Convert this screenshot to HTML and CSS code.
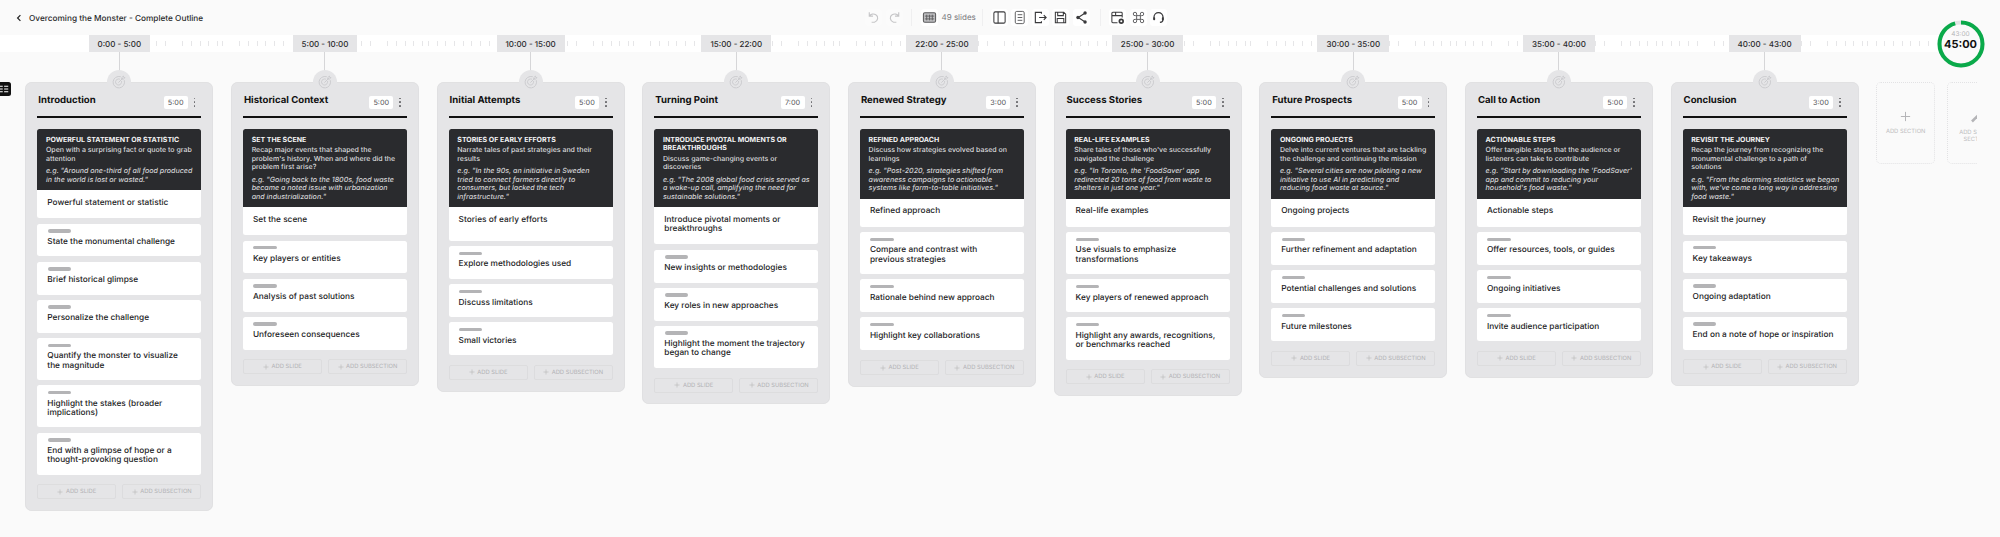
FILE: index.html
```html
<!DOCTYPE html>
<html lang="en">
<head>
<meta charset="utf-8">
<title>Overcoming the Monster - Complete Outline</title>
<link rel="stylesheet" href="styles.css">
</head>
<body>
<svg class="defs" width="0" height="0">
  <symbol id="target" viewBox="0 0 16 16"><g fill="none" stroke="currentColor" stroke-width="1.1" stroke-linecap="round"><path d="M14.200 6.400A6.600 6.600 0 1 1 9.600 1.800"/><path d="M11 7.400A3.500 3.500 0 1 1 8.600 4.600"/><path d="M7.600 8.400 12.400 3.600M11 3.200 13 1.200 13.400 2.600 14.800 3 12.800 5z"/></g></symbol>
  <symbol id="plus" viewBox="0 0 10 10"><path d="M5 .8v8.400M.8 5h8.400" fill="none" stroke="currentColor" stroke-width=".9"/></symbol>
</svg>

<header class="topbar">
  <div class="doc">
    <svg class="back" viewBox="0 0 8 8" width="8" height="8"><path d="M5.400 1.200 2.600 4l2.800 2.800" fill="none" stroke="#222" stroke-width="1.200"/></svg>
    <span class="doc-title">Overcoming the Monster - Complete Outline</span>
  </div>
  <div class="tools">
    <span class="tool ghost"><svg viewBox="0 0 16 16"><path d="M3.500 2.500v4h4M3.700 6.300C5 4.500 8 3.600 10.500 5c3 1.800 2.600 6.500-1.500 8H6" fill="none" stroke="currentColor" stroke-width="1.200"/></svg></span>
    <span class="tool ghost"><svg viewBox="0 0 16 16"><path d="M12.500 2.500v4h-4M12.300 6.300C11 4.500 8 3.600 5.500 5c-3 1.800-2.600 6.500 1.500 8h3" fill="none" stroke="currentColor" stroke-width="1.200"/></svg></span>
    <span class="sep sep-a"></span>
    <span class="tool tool-soft"><svg viewBox="0 0 16 16"><rect x="1.500" y="3" width="13" height="10" rx="1.500" fill="#bdbdbf" stroke="currentColor" stroke-width="1.100"/><path d="M3 6.500h10M3 9.500h10M5 5v6M8 5v6M11 5v6" stroke="currentColor" stroke-width=".9" fill="none"/></svg></span>
    <span class="slides-count">49 slides</span>
    <span class="sep sep-b"></span>
    <span class="tool"><svg viewBox="0 0 16 16"><rect x="2" y="2" width="12" height="12" rx="1.500" fill="none" stroke="currentColor" stroke-width="1.100"/><path d="M6.500 2v12" stroke="currentColor" stroke-width="1.100"/></svg></span>
    <span class="tool tool-soft"><svg viewBox="0 0 16 16"><path d="M3.500 3c0-1 .6-1.500 1.500-1.500h6.500c1 0 1.500.6 1.500 1.500v10c0 1-.6 1.500-1.500 1.500H5c-1 0-1.500-.6-1.500-1.500zM6 5h5M6 8h5M6 11h5" fill="none" stroke="currentColor" stroke-width="1"/></svg></span>
    <span class="tool"><svg viewBox="0 0 16 16"><path d="M9 4V2.500H2.500v11H9V12M6.500 8h7.500M11.500 5.500 14 8l-2.500 2.500" fill="none" stroke="currentColor" stroke-width="1.200"/></svg></span>
    <span class="tool"><svg viewBox="0 0 16 16"><path d="M2.500 2.500h9l2 2v9h-11zM5 2.500v3.500h6V2.500M4.500 13.500V9h7v4.500" fill="none" stroke="currentColor" stroke-width="1.100"/></svg></span>
    <span class="tool"><svg viewBox="0 0 16 16"><path d="M11.500 3.500 4.500 8l7 4.500" fill="none" stroke="currentColor" stroke-width="1.200"/><circle cx="4.200" cy="8" r="1.800" fill="currentColor"/><circle cx="11.800" cy="3.200" r="1.800" fill="currentColor"/><circle cx="11.800" cy="12.800" r="1.800" fill="currentColor"/></svg></span>
    <span class="sep sep-c"></span>
    <span class="tool"><svg viewBox="0 0 16 16"><path d="M8 13.500H3a1 1 0 0 1-1-1v-9a1 1 0 0 1 1-1h9a1 1 0 0 1 1 1V8M2 6h11M6 2.500V6" fill="none" stroke="currentColor" stroke-width="1.100"/><circle cx="12" cy="12" r="2" fill="none" stroke="currentColor" stroke-width="1.800"/></svg></span>
    <span class="tool tool-soft"><svg viewBox="0 0 16 16"><path d="M6 6h4v4H6zM6 6H4.500A1.800 1.800 0 1 1 6 4.500zM10 6V4.500A1.800 1.800 0 1 1 11.500 6zM10 10h1.500A1.800 1.800 0 1 1 10 11.500zM6 10v1.500A1.800 1.800 0 1 1 4.500 10z" fill="none" stroke="currentColor" stroke-width="1"/></svg></span>
    <span class="tool"><svg viewBox="0 0 16 16"><path d="M3.200 10V7.500a4.800 4.800 0 0 1 9.600 0V10M12.800 10c0 2-1.500 3-3.300 3.200" fill="none" stroke="currentColor" stroke-width="1.300"/><rect x="2.400" y="7.600" width="2" height="3.400" rx=".8" fill="currentColor"/><rect x="11.600" y="7.600" width="2" height="3.400" rx=".8" fill="currentColor"/></svg></span>
  </div>
</header>

<div class="timeline">
  <div class="slot slot-first"><span class="range">0:00 - 5:00</span></div>
  <div class="slot"><span class="range">5:00 - 10:00</span></div>
  <div class="slot"><span class="range">10:00 - 15:00</span></div>
  <div class="slot"><span class="range">15:00 - 22:00</span></div>
  <div class="slot"><span class="range">22:00 - 25:00</span></div>
  <div class="slot"><span class="range">25:00 - 30:00</span></div>
  <div class="slot"><span class="range">30:00 - 35:00</span></div>
  <div class="slot"><span class="range">35:00 - 40:00</span></div>
  <div class="slot"><span class="range">40:00 - 43:00</span></div>
  <div class="slot-tail"></div>
</div>

<div class="clock">
  <svg class="clock-ring" viewBox="0 0 48 48" width="48" height="48">
    <circle cx="24" cy="24" r="21.500" fill="#fafafa" stroke="#e3e3e5" stroke-width="4"/>
    <circle cx="24" cy="24" r="21.500" fill="none" stroke="#0aaa4a" stroke-width="4" pathLength="45" stroke-dasharray="43 45" transform="rotate(-90 24 24)"/>
  </svg>
  <span class="clock-used">43:00</span>
  <span class="clock-total">45:00</span>
</div>

<button class="side-tab" type="button" aria-label="Outline">
  <svg viewBox="0 0 12 14" width="11" height="14"><path d="M0 4h3M0 7h3M0 10h3M4.500 4H9M4.500 7H9M4.500 10H9" stroke="#fff" stroke-width="1.100" fill="none"/></svg>
</button>

<main class="board">

  <section class="col">
    <span class="connector"></span>
    <span class="notch"><svg width="14" height="14"><use href="#target"/></svg></span>
    <div class="col-head"><h2>Introduction</h2><span class="dur">5:00</span><span class="kebab"><i></i><i></i><i></i></span></div>
    <div class="rule"></div>
    <div class="cards">
      <div class="lead">
        <div class="brief">
          <h3>POWERFUL STATEMENT OR STATISTIC</h3>
          <p>Open with a surprising fact or quote to grab attention</p>
          <p class="eg">e.g. "Around one-third of all food produced in the world is lost or wasted."</p>
        </div>
        <div class="lead-text">Powerful statement or statistic</div>
      </div>
      <div class="item"><span class="bar"></span><div>State the monumental challenge</div></div>
      <div class="item"><span class="bar"></span><div>Brief historical glimpse</div></div>
      <div class="item"><span class="bar"></span><div>Personalize the challenge</div></div>
      <div class="item"><span class="bar"></span><div>Quantify the monster to visualize the magnitude</div></div>
      <div class="item"><span class="bar"></span><div>Highlight the stakes (broader implications)</div></div>
      <div class="item"><span class="bar"></span><div>End with a glimpse of hope or a thought-provoking question</div></div>
    </div>
    <div class="adds"><span class="add"><svg width="6" height="6"><use href="#plus"/></svg>ADD SLIDE</span><span class="add"><svg width="6" height="6"><use href="#plus"/></svg>ADD SUBSECTION</span></div>
  </section>

  <section class="col">
    <span class="connector"></span>
    <span class="notch"><svg width="14" height="14"><use href="#target"/></svg></span>
    <div class="col-head"><h2>Historical Context</h2><span class="dur">5:00</span><span class="kebab"><i></i><i></i><i></i></span></div>
    <div class="rule"></div>
    <div class="cards">
      <div class="lead">
        <div class="brief">
          <h3>SET THE SCENE</h3>
          <p>Recap major events that shaped the problem's history. When and where did the problem first arise?</p>
          <p class="eg">e.g. "Going back to the 1800s, food waste became a noted issue with urbanization and industrialization."</p>
        </div>
        <div class="lead-text">Set the scene</div>
      </div>
      <div class="item"><span class="bar"></span><div>Key players or entities</div></div>
      <div class="item"><span class="bar"></span><div>Analysis of past solutions</div></div>
      <div class="item"><span class="bar"></span><div>Unforeseen consequences</div></div>
    </div>
    <div class="adds"><span class="add"><svg width="6" height="6"><use href="#plus"/></svg>ADD SLIDE</span><span class="add"><svg width="6" height="6"><use href="#plus"/></svg>ADD SUBSECTION</span></div>
  </section>

  <section class="col">
    <span class="connector"></span>
    <span class="notch"><svg width="14" height="14"><use href="#target"/></svg></span>
    <div class="col-head"><h2>Initial Attempts</h2><span class="dur">5:00</span><span class="kebab"><i></i><i></i><i></i></span></div>
    <div class="rule"></div>
    <div class="cards">
      <div class="lead">
        <div class="brief">
          <h3>STORIES OF EARLY EFFORTS</h3>
          <p>Narrate tales of past strategies and their results</p>
          <p class="eg">e.g. "In the 90s, an initiative in Sweden tried to connect farmers directly to consumers, but lacked the tech infrastructure."</p>
        </div>
        <div class="lead-text lead-text-tall">Stories of early efforts</div>
      </div>
      <div class="item"><span class="bar"></span><div>Explore methodologies used</div></div>
      <div class="item"><span class="bar"></span><div>Discuss limitations</div></div>
      <div class="item"><span class="bar"></span><div>Small victories</div></div>
    </div>
    <div class="adds"><span class="add"><svg width="6" height="6"><use href="#plus"/></svg>ADD SLIDE</span><span class="add"><svg width="6" height="6"><use href="#plus"/></svg>ADD SUBSECTION</span></div>
  </section>

  <section class="col">
    <span class="connector"></span>
    <span class="notch"><svg width="14" height="14"><use href="#target"/></svg></span>
    <div class="col-head"><h2>Turning Point</h2><span class="dur">7:00</span><span class="kebab"><i></i><i></i><i></i></span></div>
    <div class="rule"></div>
    <div class="cards">
      <div class="lead">
        <div class="brief">
          <h3>INTRODUCE PIVOTAL MOMENTS OR BREAKTHROUGHS</h3>
          <p>Discuss game-changing events or discoveries</p>
          <p class="eg">e.g. "The 2008 global food crisis served as a wake-up call, amplifying the need for sustainable solutions."</p>
        </div>
        <div class="lead-text">Introduce pivotal moments or breakthroughs</div>
      </div>
      <div class="item"><span class="bar"></span><div>New insights or methodologies</div></div>
      <div class="item"><span class="bar"></span><div>Key roles in new approaches</div></div>
      <div class="item"><span class="bar"></span><div>Highlight the moment the trajectory began to change</div></div>
    </div>
    <div class="adds"><span class="add"><svg width="6" height="6"><use href="#plus"/></svg>ADD SLIDE</span><span class="add"><svg width="6" height="6"><use href="#plus"/></svg>ADD SUBSECTION</span></div>
  </section>

  <section class="col">
    <span class="connector"></span>
    <span class="notch"><svg width="14" height="14"><use href="#target"/></svg></span>
    <div class="col-head"><h2>Renewed Strategy</h2><span class="dur">3:00</span><span class="kebab"><i></i><i></i><i></i></span></div>
    <div class="rule"></div>
    <div class="cards">
      <div class="lead">
        <div class="brief">
          <h3>REFINED APPROACH</h3>
          <p>Discuss how strategies evolved based on learnings</p>
          <p class="eg">e.g. "Post-2020, strategies shifted from awareness campaigns to actionable systems like farm-to-table initiatives."</p>
        </div>
        <div class="lead-text">Refined approach</div>
      </div>
      <div class="item"><span class="bar"></span><div>Compare and contrast with previous strategies</div></div>
      <div class="item"><span class="bar"></span><div>Rationale behind new approach</div></div>
      <div class="item"><span class="bar"></span><div>Highlight key collaborations</div></div>
    </div>
    <div class="adds"><span class="add"><svg width="6" height="6"><use href="#plus"/></svg>ADD SLIDE</span><span class="add"><svg width="6" height="6"><use href="#plus"/></svg>ADD SUBSECTION</span></div>
  </section>

  <section class="col">
    <span class="connector"></span>
    <span class="notch"><svg width="14" height="14"><use href="#target"/></svg></span>
    <div class="col-head"><h2>Success Stories</h2><span class="dur">5:00</span><span class="kebab"><i></i><i></i><i></i></span></div>
    <div class="rule"></div>
    <div class="cards">
      <div class="lead">
        <div class="brief">
          <h3>REAL-LIFE EXAMPLES</h3>
          <p>Share tales of those who've successfully navigated the challenge</p>
          <p class="eg">e.g. "In Toronto, the 'FoodSaver' app redirected 20 tons of food from waste to shelters in just one year."</p>
        </div>
        <div class="lead-text">Real-life examples</div>
      </div>
      <div class="item"><span class="bar"></span><div>Use visuals to emphasize transformations</div></div>
      <div class="item"><span class="bar"></span><div>Key players of renewed approach</div></div>
      <div class="item"><span class="bar"></span><div>Highlight any awards, recognitions, or benchmarks reached</div></div>
    </div>
    <div class="adds"><span class="add"><svg width="6" height="6"><use href="#plus"/></svg>ADD SLIDE</span><span class="add"><svg width="6" height="6"><use href="#plus"/></svg>ADD SUBSECTION</span></div>
  </section>

  <section class="col">
    <span class="connector"></span>
    <span class="notch"><svg width="14" height="14"><use href="#target"/></svg></span>
    <div class="col-head"><h2>Future Prospects</h2><span class="dur">5:00</span><span class="kebab"><i></i><i></i><i></i></span></div>
    <div class="rule"></div>
    <div class="cards">
      <div class="lead">
        <div class="brief">
          <h3>ONGOING PROJECTS</h3>
          <p>Delve into current ventures that are tackling the challenge and continuing the mission</p>
          <p class="eg">e.g. "Several cities are now piloting a new initiative to use AI in predicting and reducing food waste at source."</p>
        </div>
        <div class="lead-text">Ongoing projects</div>
      </div>
      <div class="item"><span class="bar"></span><div>Further refinement and adaptation</div></div>
      <div class="item"><span class="bar"></span><div>Potential challenges and solutions</div></div>
      <div class="item"><span class="bar"></span><div>Future milestones</div></div>
    </div>
    <div class="adds"><span class="add"><svg width="6" height="6"><use href="#plus"/></svg>ADD SLIDE</span><span class="add"><svg width="6" height="6"><use href="#plus"/></svg>ADD SUBSECTION</span></div>
  </section>

  <section class="col">
    <span class="connector"></span>
    <span class="notch"><svg width="14" height="14"><use href="#target"/></svg></span>
    <div class="col-head"><h2>Call to Action</h2><span class="dur">5:00</span><span class="kebab"><i></i><i></i><i></i></span></div>
    <div class="rule"></div>
    <div class="cards">
      <div class="lead">
        <div class="brief">
          <h3>ACTIONABLE STEPS</h3>
          <p>Offer tangible steps that the audience or listeners can take to contribute</p>
          <p class="eg">e.g. "Start by downloading the 'FoodSaver' app and commit to reducing your household's food waste."</p>
        </div>
        <div class="lead-text">Actionable steps</div>
      </div>
      <div class="item"><span class="bar"></span><div>Offer resources, tools, or guides</div></div>
      <div class="item"><span class="bar"></span><div>Ongoing initiatives</div></div>
      <div class="item"><span class="bar"></span><div>Invite audience participation</div></div>
    </div>
    <div class="adds"><span class="add"><svg width="6" height="6"><use href="#plus"/></svg>ADD SLIDE</span><span class="add"><svg width="6" height="6"><use href="#plus"/></svg>ADD SUBSECTION</span></div>
  </section>

  <section class="col">
    <span class="connector"></span>
    <span class="notch"><svg width="14" height="14"><use href="#target"/></svg></span>
    <div class="col-head"><h2>Conclusion</h2><span class="dur">3:00</span><span class="kebab"><i></i><i></i><i></i></span></div>
    <div class="rule"></div>
    <div class="cards">
      <div class="lead">
        <div class="brief">
          <h3>REVISIT THE JOURNEY</h3>
          <p>Recap the journey from recognizing the monumental challenge to a path of<br>solutions</p>
          <p class="eg">e.g. "From the alarming statistics we began with, we've come a long way in addressing food waste."</p>
        </div>
        <div class="lead-text">Revisit the journey</div>
      </div>
      <div class="item"><span class="bar"></span><div>Key takeaways</div></div>
      <div class="item"><span class="bar"></span><div>Ongoing adaptation</div></div>
      <div class="item"><span class="bar"></span><div>End on a note of hope or inspiration</div></div>
    </div>
    <div class="adds"><span class="add"><svg width="6" height="6"><use href="#plus"/></svg>ADD SLIDE</span><span class="add"><svg width="6" height="6"><use href="#plus"/></svg>ADD SUBSECTION</span></div>
  </section>

  <div class="new-tiles">
    <div class="new-tile">
      <svg class="new-icon" width="11" height="11"><use href="#plus"/></svg>
      <span>ADD SECTION</span>
    </div>
    <div class="new-tile">
      <svg class="new-icon" viewBox="0 0 12 12" width="12" height="12"><path d="M2 10.500 8.500 4" stroke="currentColor" stroke-width="2.600" fill="none"/><path d="M9.500 .8v2M8.500 1.800h2" stroke="currentColor" stroke-width=".7" fill="none"/></svg>
      <span>ADD SMART SECTION</span>
    </div>
  </div>
</main>
</body>
</html>
```
FILE: styles.css
```css
* { box-sizing: border-box; margin: 0; padding: 0; }

html, body {
  width: 2000px;
  height: 537px;
  overflow: hidden;
  background: #fafafa;
  color: #1e1e20;
  font-family: Inter, "Liberation Sans", sans-serif;
  text-rendering: geometricPrecision;
}

body { position: relative; }

.defs { position: absolute; }

.topbar {
  position: relative;
  height: 35px;
  display: flex;
  align-items: center;
}

.doc {
  display: flex;
  align-items: center;
  gap: 6px;
  padding-left: 15px;
}

.back { display: block; }

.doc-title {
  font-size: 8.250px;
  font-weight: 500;
  color: #2a2a2c;
  white-space: nowrap;
}

.tools {
  position: absolute;
  left: 865px;
  top: 8.500px;
  display: flex;
  align-items: center;
  gap: 3.500px;
  height: 17px;
}

.tool {
  width: 17px;
  height: 17px;
  display: flex;
  align-items: center;
  justify-content: center;
  background: #fff;
  border-radius: 3px;
  color: #3a3a3c;
}

.tool svg { width: 15px; height: 15px; display: block; }

.tool.ghost { background: #fbfbfb; color: #c6c6c8; }
.tool-soft { color: #5a5a5c; }

.sep {
  width: 1px;
  height: 17px;
  background: #efeff0;
}

.sep-a { margin: 0 5.500px 0 5px; }
.sep-b { margin: 0 4px 0 5px; }
.sep-c { margin: 0 4.500px 0 7px; }

.slides-count {
  font-size: 8px;
  color: #77777a;
  white-space: nowrap;
  width: 32px;
}

.timeline {
  height: 17px;
  width: 1950px;
  display: flex;
  padding-left: 16.500px;
  background: #fff;
}

.slot, .slot-tail {
  background-image: repeating-linear-gradient(90deg, #e6e6e8 0 .8px, transparent .8px 8.700px);
  background-size: 100% 5px;
  background-position: 0 6px;
  background-repeat: no-repeat;
}

.slot {
  flex: 0 0 205.670px;
  display: flex;
  justify-content: center;
}

.slot-first {
  background-image:
    linear-gradient(90deg, #fff 0 50%, transparent 50%),
    repeating-linear-gradient(90deg, #e6e6e8 0 .8px, transparent .8px 8.700px);
}

.slot-tail { flex: 1; }

.range {
  display: flex;
  align-items: center;
  height: 17px;
  padding: 0 9px;
  background: #e5e5e7;
  font-size: 8px;
  font-weight: 500;
  color: #2a2a2c;
  white-space: nowrap;
}

.clock {
  position: absolute;
  left: 1936.500px;
  top: 19.500px;
  width: 48px;
  height: 48px;
  display: flex;
  flex-direction: column;
  align-items: center;
  justify-content: center;
  padding-bottom: 7px;
}

.clock-ring { position: absolute; left: 0; top: 0; }

.clock-used {
  position: relative;
  font-size: 6.500px;
  line-height: 7px;
  color: #b5b5b8;
}

.clock-total {
  position: relative;
  font-size: 11px;
  line-height: 12px;
  font-weight: 700;
  color: #111;
}

.side-tab {
  position: absolute;
  left: 0;
  top: 82px;
  width: 11px;
  height: 14px;
  background: #111;
  border: 0;
  border-radius: 0 2.500px 2.500px 0;
  display: flex;
  align-items: center;
}

.board {
  display: flex;
  align-items: flex-start;
  gap: 17.670px;
  width: 1977px;
  height: 485px;
  padding: 29.700px 0 0 25.300px;
  overflow: hidden;
}

.col {
  position: relative;
  flex: 0 0 188px;
  padding: 14.300px 12px 11.700px;
  background: #e5e5e7;
  border-radius: 7px;
  box-shadow: inset 0 0 0 .8px #dfdfe1;
}

.connector {
  position: absolute;
  left: 93.500px;
  top: -29.700px;
  width: 1px;
  height: 20px;
  background: #d6d6d8;
}

.notch {
  position: absolute;
  left: 82px;
  top: -11.700px;
  width: 24px;
  height: 24px;
  border-radius: 50%;
  background: #e5e5e7;
  color: #cbcbce;
  display: flex;
  align-items: center;
  justify-content: center;
}

.notch svg { display: block; }

.col-head {
  display: flex;
  align-items: center;
  height: 12.700px;
  padding-left: 1px;
}

.col-head h2 {
  flex: 1;
  font-size: 9.600px;
  line-height: 12px;
  font-weight: 700;
  color: #111;
  margin-top: -2px;
  white-space: nowrap;
}

.dur {
  width: 24px;
  height: 12.700px;
  display: flex;
  align-items: center;
  justify-content: center;
  background: #fff;
  border-radius: 2px;
  font-size: 7.300px;
  color: #55555a;
}

.kebab {
  width: 13.700px;
  display: flex;
  flex-direction: column;
  align-items: center;
  gap: 2px;
}

.kebab i {
  display: block;
  width: 1.700px;
  height: 1.700px;
  border-radius: 50%;
  background: #6a6a6e;
}

.rule {
  height: 2px;
  margin-top: 7.300px;
  background: #111;
}

.cards {
  display: flex;
  flex-direction: column;
  gap: 5.200px;
  margin-top: 10.700px;
}

.lead, .item {
  background: #fff;
  border-radius: 2.500px;
  font-size: 8.300px;
  line-height: 1.108;
  font-weight: 500;
  color: #232325;
}

.lead { overflow: hidden; }

.brief {
  padding: 7.200px 6.800px 6px 8.700px;
  background: #2a2b2e;
  color: #dcdcde;
  font-size: 7px;
  line-height: 1.214;
}

.brief h3 {
  font-size: 7px;
  line-height: 1.200;
  font-weight: 700;
  color: #f4f4f5;
}

.brief p { margin-top: 2.200px; }

.brief .eg {
  margin-top: 3.800px;
  font-size: 7.100px;
  line-height: 1.197;
  font-style: italic;
  color: #d4d4d6;
}

.lead-text { padding: 8.500px 12.500px 10.500px 10px; }
.lead-text-tall { padding-bottom: 16.100px; }

.item { padding: 5.600px 12.500px 9.400px 10px; }

.bar {
  display: block;
  width: 23.500px;
  height: 3.400px;
  margin: 0 0 5.400px .3px;
  border-radius: 2px;
  background: #b4b4b6;
}

.adds {
  display: flex;
  gap: 6px;
  margin-top: 9.600px;
}

.add {
  flex: 1;
  height: 15px;
  display: flex;
  align-items: center;
  justify-content: center;
  gap: 2.500px;
  border-radius: 2.500px;
  box-shadow: inset 0 0 0 .8px #dadadc;
  font-size: 5.800px;
  color: #b2b2b5;
  white-space: nowrap;
}

.add svg { display: block; flex: none; }

.new-tiles {
  display: flex;
  gap: 11.700px;
  flex: none;
}

.new-tile {
  width: 59px;
  height: 82px;
  display: flex;
  flex-direction: column;
  align-items: center;
  border: 1px dotted #e2e2e4;
  border-radius: 5px;
  padding: 28px 4px 0;
  font-size: 5.800px;
  line-height: 7.500px;
  color: #bdbdc0;
  text-align: center;
}

.new-icon { color: #b4b4b7; margin-bottom: 6px; display: block; }
```
